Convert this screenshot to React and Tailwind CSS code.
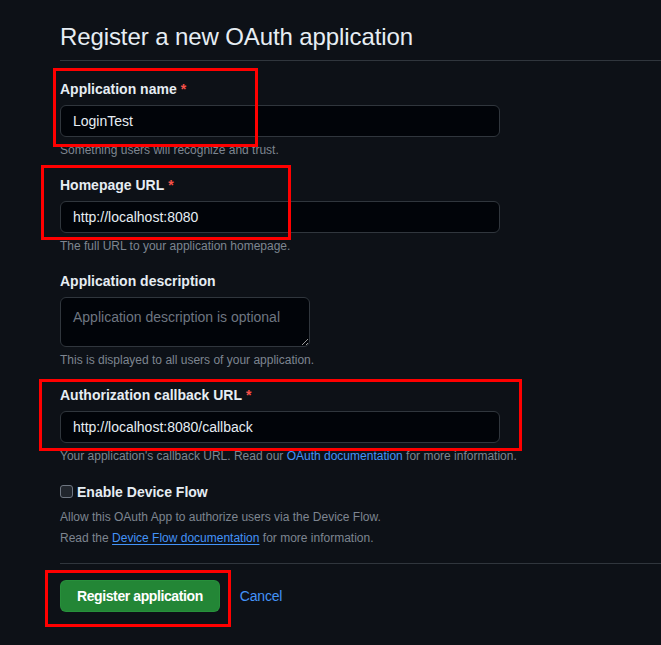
const fields = [
    { label: "Application name", value: "LoginTest", help: "Something users will recognize and trust.", required: true },
    { label: "Homepage URL", value: "http://localhost:8080", help: "The full URL to your application homepage.", required: true },
];

const Label = ({ children, required }) => (
    <label className="block h-[21px] leading-[21px] text-sm font-semibold text-[#e6edf3] mb-[5px]">
        {children}
        {required && <span className="text-[#f85149] ml-1">*</span>}
    </label>
);

const TextInput = ({ value }) => (
    <input
        readOnly
        value={value}
        className="block w-[440px] h-8 px-3 text-sm text-[#e6edf3] bg-[#010409] border border-[#30363d] rounded-md outline-none"
    />
);

const Help = ({ children }) => (
    <p className="mt-1 text-xs leading-[18px] text-[#7d8590]">{children}</p>
);

export default function App() {
    return (
        <div
            className="relative min-h-screen w-full bg-[#0d1117] overflow-hidden"
            style={{ fontFamily: '"Liberation Sans", Arial, sans-serif' }}
        >
            <div className="pl-[60px]">
                {/* Heading */}
                <div className="pt-[19px] pb-[5px] border-b border-[#30363d]">
                    <h1 className="text-2xl leading-9 tracking-[-0.1px] text-[#e6edf3]">Register a new OAuth application</h1>
                </div>

                {/* Fields */}
                <div className="pt-[18px]">
                    {fields.map((f, i) => (
                        <div key={i} className="mb-4">
                            <Label required={f.required}>{f.label}</Label>
                            <TextInput value={f.value} />
                            <Help>{f.help}</Help>
                        </div>
                    ))}

                    <div className="mb-4">
                        <Label>Application description</Label>
                        <textarea
                            placeholder="Application description is optional"
                            className="block w-[250px] h-[50px] px-3 pt-[9px] text-sm leading-5 text-[#e6edf3] placeholder:text-[#6e7681] bg-[#010409] border border-[#30363d] rounded-md outline-none"
                        />
                        <Help>This is displayed to all users of your application.</Help>
                    </div>

                    <div className="mb-4">
                        <Label required>Authorization callback URL</Label>
                        <TextInput value="http://localhost:8080/callback" />
                        <Help>
                            Your application's callback URL. Read our{" "}
                            <a className="text-[#4493f8]">OAuth documentation</a> for more information.
                        </Help>
                    </div>

                    {/* Device flow */}
                    <div className="flex items-center gap-1 h-[21px]">
                        <span className="w-[13px] h-[13px] rounded-[3px] bg-[#21262d] border border-[#6e7681]"></span>
                        <span className="text-sm font-semibold text-[#e6edf3]">Enable Device Flow</span>
                    </div>
                    <p className="mt-[6px] text-xs leading-[18px] text-[#7d8590]">
                        Allow this OAuth App to authorize users via the Device Flow.
                    </p>
                    <p className="mt-[3px] text-xs leading-[18px] text-[#7d8590]">
                        Read the{" "}
                        <a className="text-[#4493f8] underline underline-offset-2">Device Flow documentation</a>{" "}
                        for more information.
                    </p>
                </div>

                <div className="mt-4 border-t border-[#30363d]"></div>

                {/* Actions */}
                <div className="flex items-center gap-5 mt-4">
                    <button className="h-8 px-4 rounded-md bg-[#238636] border border-[#2ea043]/40 text-sm font-semibold tracking-[-0.4px] text-white">
                        Register application
                    </button>
                    <a className="text-sm tracking-[-0.2px] text-[#4493f8]">Cancel</a>
                </div>
            </div>

            {/* Red annotation boxes */}
            <div className="absolute left-[53px] top-[68px] w-[205px] h-[79px] border-[3px] border-[#ff0000]"></div>
            <div className="absolute left-[41px] top-[165px] w-[250px] h-[75px] border-[3px] border-[#ff0000]"></div>
            <div className="absolute left-[39px] top-[379px] w-[483px] h-[72px] border-[3px] border-[#ff0000]"></div>
            <div className="absolute left-[45px] top-[570px] w-[186px] h-[57px] border-[3px] border-[#ff0000]"></div>
        </div>
    );
}
